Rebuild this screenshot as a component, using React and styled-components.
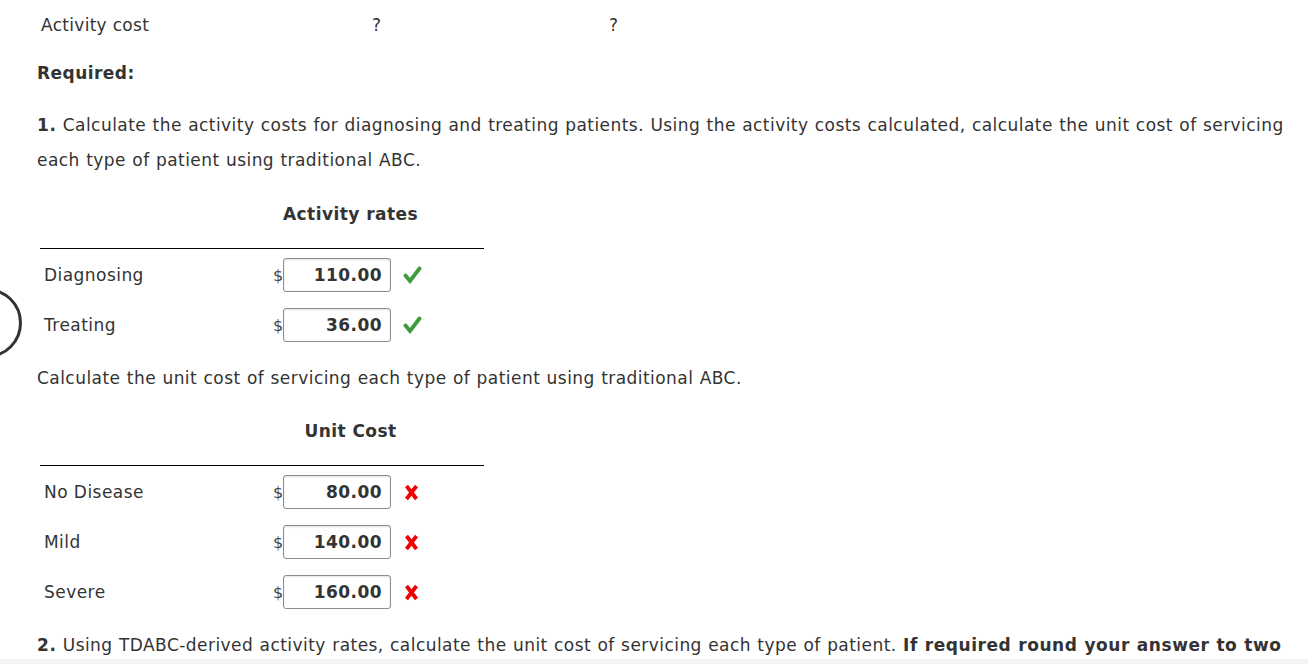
import React from 'react';
import styled, { createGlobalStyle } from 'styled-components';

const GlobalStyle = createGlobalStyle`
  html, body {
    margin: 0;
    padding: 0;
    background: #fff;
  }
  body {
    font-family: 'DejaVu Sans', Verdana, sans-serif;
    color: #333;
    overflow: hidden;
  }
`;

const Page = styled.div`
  position: relative;
  width: 1308px;
  height: 664px;
  overflow: hidden;
  padding: 0 20px 0 37px;
  box-sizing: border-box;
  font-size: 17px;
  letter-spacing: 0.45px;
`;

const TopRow = styled.div`
  display: grid;
  grid-template-columns: 331px 237px auto;
  padding: 13px 0 0 4px;
  height: 24px;
  line-height: 24px;
  letter-spacing: 0.3px;
`;

const Heading = styled.div`
  font-weight: bold;
  line-height: 24px;
  margin-top: 24px;
`;

const Para = styled.p`
  margin: ${(p) => p.mt || '23px'} 0 0;
  line-height: 35px;
  word-spacing: 0.5px;
  b {
    font-weight: bold;
    letter-spacing: 0.55px;
  }
`;

const Table = styled.div`
  width: 444px;
  margin: ${(p) => p.mt || '24px'} 0 0 3px;
`;

const TableHead = styled.div`
  display: grid;
  grid-template-columns: 230px 161px;
  border-bottom: 1px solid #000;
  padding-bottom: 22px;
  margin-bottom: 1px;
  font-weight: bold;
  line-height: 24px;
  div:nth-child(2) {
    text-align: center;
  }
`;

const Row = styled.div`
  display: grid;
  grid-template-columns: 230px 161px;
  align-items: center;
  height: 50px;
  padding-left: 4px;
`;

const Cell = styled.div`
  display: flex;
  align-items: center;
  margin-left: -4px;
  padding-left: 3px;
`;

const Dollar = styled.span`
  width: 10px;
  font-size: 16px;
  letter-spacing: 0;
  color: #444;
`;

const Box = styled.div`
  width: 108px;
  height: 34px;
  box-sizing: border-box;
  border: 1px solid #8c8c8c;
  border-radius: 3px;
  box-shadow: inset 0 1px 2px rgba(0, 0, 0, 0.12);
  display: flex;
  align-items: center;
  justify-content: flex-end;
  padding-right: 8px;
  font-weight: bold;
  color: #333;
`;

const Mark = styled.span`
  margin-left: 12px;
  display: inline-flex;
  align-items: center;
`;

const Circle = styled.div`
  position: absolute;
  left: -48px;
  top: 288px;
  width: 64px;
  height: 64px;
  border: 3px solid #333;
  border-radius: 50%;
`;

const Footer = styled.div`
  position: absolute;
  left: 0;
  right: 0;
  bottom: 0;
  height: 5px;
  background: #f3f3f3;
`;

const Check = () => (
  <svg width="19" height="18" viewBox="0 0 19 18">
    <path d="M2.5 9.5 L7 15 L16.5 2.5" fill="none" stroke="#3d9b3d" strokeWidth="3.8" strokeLinecap="round" strokeLinejoin="miter" />
  </svg>
);

const Cross = () => (
  <svg width="17" height="17" viewBox="0 0 17 17">
    <path d="M3.5 2 L13.5 15 M13.5 2 L3.5 15" fill="none" stroke="#f00000" strokeWidth="3.8" strokeLinecap="butt" />
  </svg>
);

const rates = [
  { label: 'Diagnosing', value: '110.00', ok: true },
  { label: 'Treating', value: '36.00', ok: true },
];

const units = [
  { label: 'No Disease', value: '80.00', ok: false },
  { label: 'Mild', value: '140.00', ok: false },
  { label: 'Severe', value: '160.00', ok: false },
];

const DataTable = ({ title, rows, mt }) => (
  <Table mt={mt}>
    <TableHead>
      <div />
      <div>{title}</div>
    </TableHead>
    {rows.map((r) => (
      <Row key={r.label}>
        <span>{r.label}</span>
        <Cell>
          <Dollar>$</Dollar>
          <Box>{r.value}</Box>
          <Mark>{r.ok ? <Check /> : <Cross />}</Mark>
        </Cell>
      </Row>
    ))}
  </Table>
);

export default function App() {
  return (
    <>
      <GlobalStyle />
      <Page>
        <TopRow>
          <span>Activity cost</span>
          <span>?</span>
          <span>?</span>
        </TopRow>
        <Heading>Required:</Heading>
        <Para>
          <b>1.</b> Calculate the activity costs for diagnosing and treating patients. Using the activity costs calculated, calculate the unit cost of servicing each type of patient using traditional ABC.
        </Para>
        <DataTable title="Activity rates" rows={rates} mt="24px" />
        <Para mt="11px">Calculate the unit cost of servicing each type of patient using traditional ABC.</Para>
        <DataTable title="Unit Cost" rows={units} mt="23px" />
        <Para mt="11px">
          <b>2.</b> Using TDABC-derived activity rates, calculate the unit cost of servicing each type of patient. <b>If required round your answer to two</b>
        </Para>
        <Circle />
        <Footer />
      </Page>
    </>
  );
}
